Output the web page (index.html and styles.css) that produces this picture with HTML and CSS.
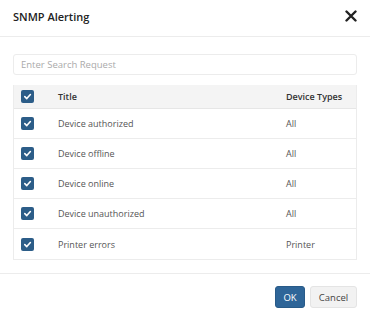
FILE: index.html
```html
<!DOCTYPE html>
<html>
<head>
<meta charset="utf-8">
<link rel="stylesheet" href="styles.css">
</head>
<body>
<div class="modal">
  <div class="modal-header">
    <div class="modal-title">SNMP Alerting</div>
    <svg class="close" width="12" height="12" viewBox="0 0 12 12"><path d="M1.5 1.5 L10.5 10.5 M10.5 1.5 L1.5 10.5" stroke="#222" stroke-width="2.4" stroke-linecap="round"/></svg>
  </div>
  <div class="modal-body">
    <div class="search">Enter Search Request</div>
    <div class="table">
      <div class="row head">
        <div class="cb-cell"><span class="cb"><svg width="9" height="9" viewBox="0 0 10 10"><path d="M2 5.2 L4.2 7.3 L8.2 2.8" fill="none" stroke="#fff" stroke-width="1.8" stroke-linecap="round" stroke-linejoin="round"/></svg></span></div>
        <div class="title-cell">Title</div>
        <div class="type-cell">Device Types</div>
      </div>
      <div class="row">
        <div class="cb-cell"><span class="cb"><svg width="9" height="9" viewBox="0 0 10 10"><path d="M2 5.2 L4.2 7.3 L8.2 2.8" fill="none" stroke="#fff" stroke-width="1.8" stroke-linecap="round" stroke-linejoin="round"/></svg></span></div>
        <div class="title-cell">Device authorized</div>
        <div class="type-cell">All</div>
      </div>
      <div class="row">
        <div class="cb-cell"><span class="cb"><svg width="9" height="9" viewBox="0 0 10 10"><path d="M2 5.2 L4.2 7.3 L8.2 2.8" fill="none" stroke="#fff" stroke-width="1.8" stroke-linecap="round" stroke-linejoin="round"/></svg></span></div>
        <div class="title-cell">Device offline</div>
        <div class="type-cell">All</div>
      </div>
      <div class="row">
        <div class="cb-cell"><span class="cb"><svg width="9" height="9" viewBox="0 0 10 10"><path d="M2 5.2 L4.2 7.3 L8.2 2.8" fill="none" stroke="#fff" stroke-width="1.8" stroke-linecap="round" stroke-linejoin="round"/></svg></span></div>
        <div class="title-cell">Device online</div>
        <div class="type-cell">All</div>
      </div>
      <div class="row">
        <div class="cb-cell"><span class="cb"><svg width="9" height="9" viewBox="0 0 10 10"><path d="M2 5.2 L4.2 7.3 L8.2 2.8" fill="none" stroke="#fff" stroke-width="1.8" stroke-linecap="round" stroke-linejoin="round"/></svg></span></div>
        <div class="title-cell">Device unauthorized</div>
        <div class="type-cell">All</div>
      </div>
      <div class="row last">
        <div class="cb-cell"><span class="cb"><svg width="9" height="9" viewBox="0 0 10 10"><path d="M2 5.2 L4.2 7.3 L8.2 2.8" fill="none" stroke="#fff" stroke-width="1.8" stroke-linecap="round" stroke-linejoin="round"/></svg></span></div>
        <div class="title-cell">Printer errors</div>
        <div class="type-cell">Printer</div>
      </div>
    </div>
  </div>
  <div class="modal-footer">
    <button class="btn btn-primary">OK</button>
    <button class="btn btn-default">Cancel</button>
  </div>
</div>
</body>
</html>
```
FILE: styles.css
```css
* { box-sizing: border-box; }
html, body { margin: 0; padding: 0; background: #fff; }
body {
  font-family: "Open Sans", "Liberation Sans", sans-serif;
  color: #333;
  width: 370px;
  height: 317px;
  overflow: hidden;
}
.modal { width: 370px; }
.modal-header {
  height: 37px;
  border-bottom: 1px solid #ececec;
  display: flex;
  align-items: center;
  justify-content: space-between;
  padding: 0 13px 0 13px;
}
.modal-title {
  font-size: 11px;
  font-weight: 600;
  color: #222;
  margin-top: -3px;
}
.close { margin-top: -4px; margin-right: 0; }
.modal-body {
  padding: 17px 13px 13px 13px;
}
.search {
  height: 21px;
  border: 1px solid #ececec;
  border-radius: 3px;
  font-size: 9.5px;
  color: #aaa;
  padding: 0 7px;
  display: flex;
  align-items: center;
  margin-bottom: 10px;
}
.table {
  border: 1px solid #ececec;
  border-top: none;
}
.row {
  display: flex;
  align-items: center;
  height: 30px;
  border-bottom: 1px solid #ececec;
  font-size: 9px;
  color: #555;
}
.row.last { border-bottom: none; height: 30px; }
.row.head {
  height: 24px;
  background: #f4f4f4;
  font-weight: 600;
  color: #333;
  border-bottom: 1px solid #e6e6e6;
}
.cb-cell { width: 44px; padding-left: 7px; display: flex; align-items: center; }
.cb {
  width: 13px;
  height: 13px;
  border-radius: 2px;
  background: #2c5d88;
  display: flex;
  align-items: center;
  justify-content: center;
}
.title-cell { flex: 1; }
.type-cell { width: 70px; }
.modal-footer {
  border-top: 1px solid #ececec;
  display: flex;
  justify-content: flex-end;
  gap: 5px;
  padding: 12px 13px 0 13px;
}
.btn {
  height: 22px;
  font-family: "Open Sans", "Liberation Sans", sans-serif;
  font-size: 9.5px;
  border-radius: 3px;
  padding: 0;
}
.btn-primary {
  width: 30px;
  background: #2e6598;
  color: #fff;
  border: 1px solid #285a88;
}
.btn-default {
  width: 47px;
  background: #f2f2f2;
  color: #444;
  border: 1px solid #e4e4e4;
}
```
